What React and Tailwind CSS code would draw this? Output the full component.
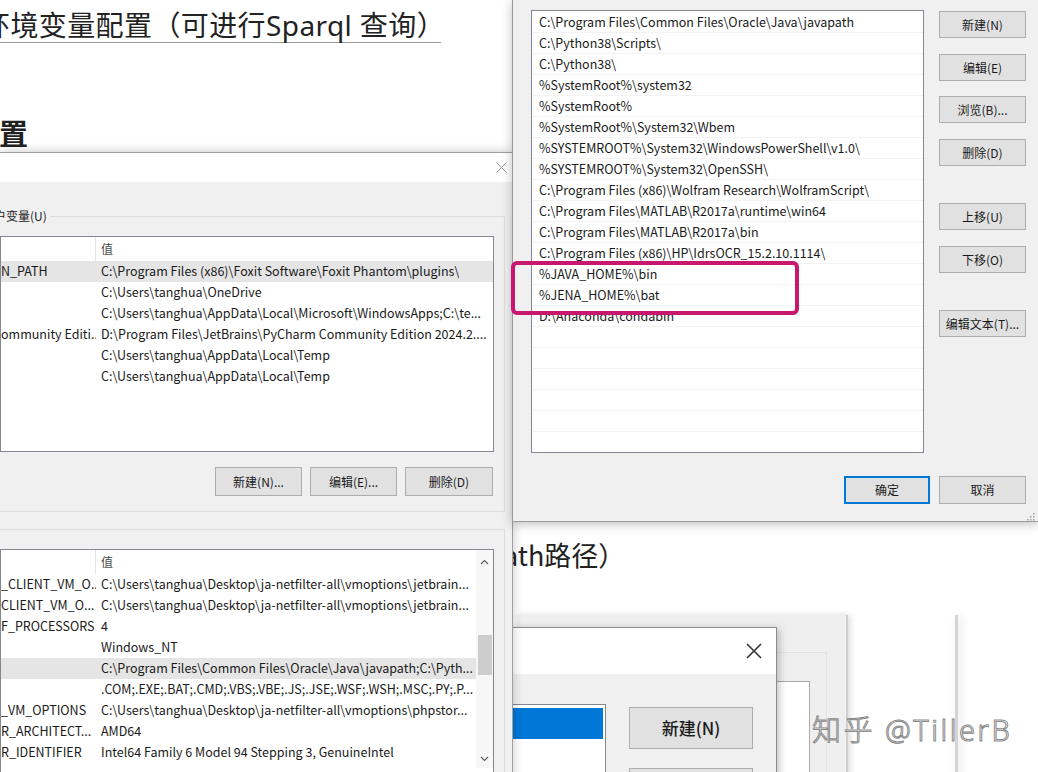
const list1 = [
  ["N_PATH", "C:\\Program Files (x86)\\Foxit Software\\Foxit Phantom\\plugins\\", true],
  ["", "C:\\Users\\tanghua\\OneDrive"],
  ["", "C:\\Users\\tanghua\\AppData\\Local\\Microsoft\\WindowsApps;C:\\te..."],
  ["ommunity Editi...", "D:\\Program Files\\JetBrains\\PyCharm Community Edition 2024.2...."],
  ["", "C:\\Users\\tanghua\\AppData\\Local\\Temp"],
  ["", "C:\\Users\\tanghua\\AppData\\Local\\Temp"],
];

const list2 = [
  ["_CLIENT_VM_O...", "C:\\Users\\tanghua\\Desktop\\ja-netfilter-all\\vmoptions\\jetbrain..."],
  ["CLIENT_VM_O...", "C:\\Users\\tanghua\\Desktop\\ja-netfilter-all\\vmoptions\\jetbrain..."],
  ["F_PROCESSORS", "4"],
  ["", "Windows_NT"],
  ["", "C:\\Program Files\\Common Files\\Oracle\\Java\\javapath;C:\\Pyth...", true],
  ["", ".COM;.EXE;.BAT;.CMD;.VBS;.VBE;.JS;.JSE;.WSF;.WSH;.MSC;.PY;.P..."],
  ["_VM_OPTIONS", "C:\\Users\\tanghua\\Desktop\\ja-netfilter-all\\vmoptions\\phpstor..."],
  ["R_ARCHITECT...", "AMD64"],
  ["R_IDENTIFIER", "Intel64 Family 6 Model 94 Stepping 3, GenuineIntel"],
];

const paths = [
  "C:\\Program Files\\Common Files\\Oracle\\Java\\javapath",
  "C:\\Python38\\Scripts\\",
  "C:\\Python38\\",
  "%SystemRoot%\\system32",
  "%SystemRoot%",
  "%SystemRoot%\\System32\\Wbem",
  "%SYSTEMROOT%\\System32\\WindowsPowerShell\\v1.0\\",
  "%SYSTEMROOT%\\System32\\OpenSSH\\",
  "C:\\Program Files (x86)\\Wolfram Research\\WolframScript\\",
  "C:\\Program Files\\MATLAB\\R2017a\\runtime\\win64",
  "C:\\Program Files\\MATLAB\\R2017a\\bin",
  "C:\\Program Files (x86)\\HP\\IdrsOCR_15.2.10.1114\\",
  "%JAVA_HOME%\\bin",
  "%JENA_HOME%\\bat",
  "D:\\Anaconda\\condabin",
  "", "", "", "", "", "",
];

function WinButton({ children, className = "" }) {
  return (
    <div
      className={
        "flex shrink-0 items-center justify-center bg-[#e1e1e1] border border-[#adadad] text-[12px] text-[#1a1a1a] " +
        className
      }
    >
      {children}
    </div>
  );
}

function Row({ c1, c2, hl, withScroll }) {
  return (
    <div
      className={
        "flex h-[21px] items-center whitespace-nowrap " +
        (hl ? "bg-[#e5e5e5] " : "") +
        (withScroll ? "w-[475px]" : "w-full")
      }
    >
      <div className="w-[95px] shrink-0 overflow-hidden text-[12.5px] text-[#1a1a1a]">{c1}</div>
      <div className="pl-[5px] overflow-hidden text-[12.5px] text-[#1a1a1a]">{c2}</div>
    </div>
  );
}

function Header() {
  return (
    <div className="flex h-[24px] items-center bg-white">
      <div className="w-[95px] h-full border-r border-[#e5e5e5]" />
      <div className="pl-[5px] text-[12px] text-[#4d4d4d]">值</div>
    </div>
  );
}

export default function App() {
  return (
    <div className="relative w-[1038px] h-[772px] overflow-hidden bg-white text-[#1a1a1a] font-['Noto_Sans_CJK_SC','Noto_Sans',sans-serif]">
      {/* article headings */}
      <div className="absolute left-[-18px] top-[8px] w-[459px] h-[35px] border-b border-[#9a9a9a] text-[28px] leading-[34px] tracking-[0.4px] whitespace-nowrap text-[#222] font-['Noto_Sans','Noto_Sans_CJK_SC',sans-serif]">
        环境变量配置（可进行Sparql 查询）
      </div>
      <div className="absolute left-[-1px] top-[112px] text-[29px] leading-[40px] font-bold text-[#222]">置</div>
      <div className="absolute left-[503px] top-[536px] text-[27px] leading-[38px] whitespace-nowrap text-[#222]">
        ath路径）
      </div>

      {/* bottom-right collage fragment */}
      <div className="absolute left-[517px] top-[615px] w-[331px] h-[170px] bg-[#efefef] border-r-2 border-[#cfcfcf] shadow-[2px_0_6px_rgba(0,0,0,0.15)]">
        <div className="absolute left-[260px] top-[37px] w-[50px] h-[150px] border-t border-r border-[#e2e2e2]" />
        <div className="absolute left-[255px] top-[66px] w-[38px] h-[150px] bg-white border-t border-r border-[#a9a9a9]" />
      </div>
      <div className="absolute left-[955px] top-[615px] w-[3px] h-[170px] bg-[#d4d4d4] shadow-[3px_0_8px_rgba(0,0,0,0.15)]" />
      <div className="absolute left-[512px] top-[627px] w-[265px] h-[200px] border-t border-r border-[#8c8c8c] bg-[#f0f0f0] shadow-[2px_2px_8px_rgba(0,0,0,0.25)] flex flex-col">
        <div className="h-[46px] shrink-0 bg-white flex items-center justify-end pr-[14px]">
          <svg width="16" height="16" viewBox="0 0 16 16">
            <path d="M1 1L15 15M15 1L1 15" stroke="#333" strokeWidth="1.6" />
          </svg>
        </div>
        <div className="flex shrink-0">
          <div className="mt-[30px] w-[94px] h-[80px] bg-white border-t border-r border-[#828790] pt-[3px] pr-[2px]">
            <div className="h-[31px] bg-[#0078d7]" />
          </div>
          <WinButton className="ml-[23px] mt-[33px] w-[124px] h-[42px] !text-[17px] font-medium">新建(N)</WinButton>
        </div>
        <WinButton className="ml-[117px] mt-[-16px] w-[124px] h-[42px]"> </WinButton>
      </div>

      {/* left window: environment variables */}
      <div className="absolute left-0 top-[152px] w-[513px] h-[640px] bg-[#f0f0f0] border-t border-r border-[#a0a0a0] shadow-[0_0_10px_rgba(0,0,0,0.22)] z-10 flex flex-col">
        <div className="h-[29px] bg-white flex items-center justify-end pr-[5px] shrink-0">
          <svg width="11" height="11" viewBox="0 0 11 11">
            <path d="M0.5 0.5L10.5 10.5M10.5 0.5L0.5 10.5" stroke="#9a9a9a" strokeWidth="1" />
          </svg>
        </div>
        {/* group 1 */}
        <div className="relative ml-[-10px] mt-[34px] w-[515px] border border-[#dcdcdc] pt-[19px] pb-[15px] shrink-0">
          <div className="absolute left-[-9px] top-[-10px] pr-[3px] bg-[#f0f0f0] text-[12px] leading-[18px] text-[#1a1a1a]">
            用户变量(U)
          </div>
          <div className="ml-[9px] w-[494px] h-[216px] bg-white border border-[#828790] overflow-hidden">
            <Header />
            {list1.map((r, i) => (
              <Row key={i} c1={r[0]} c2={r[1]} hl={r[2]} />
            ))}
          </div>
          <div className="flex justify-end gap-[8px] pr-[11px] mt-[15px]">
            <WinButton className="w-[87px] h-[29px]">新建(N)...</WinButton>
            <WinButton className="w-[87px] h-[29px]">编辑(E)...</WinButton>
            <WinButton className="w-[88px] h-[29px]">删除(D)</WinButton>
          </div>
        </div>
        {/* group 2 */}
        <div className="relative ml-[-10px] mt-[17px] w-[515px] h-[300px] border border-[#dcdcdc] pt-[19px] shrink-0">
          <div className="relative ml-[9px] w-[494px] h-[240px] bg-white border border-[#828790] overflow-hidden">
            <Header />
            {list2.map((r, i) => (
              <Row key={i} c1={r[0]} c2={r[1]} hl={r[2]} withScroll />
            ))}
            <div className="absolute right-0 top-0 w-[17px] h-[218px] bg-[#f7f7f7] flex flex-col items-center">
              <div className="h-[24px] flex items-center">
                <svg width="9" height="6" viewBox="0 0 9 6">
                  <path d="M1 5L4.5 1.5L8 5" stroke="#606060" strokeWidth="1.2" fill="none" />
                </svg>
              </div>
              <div className="mt-[61px] w-[14px] h-[40px] bg-[#cdcdcd]" />
              <div className="mt-[75px] h-[18px] flex items-center">
                <svg width="9" height="6" viewBox="0 0 9 6">
                  <path d="M1 1L4.5 4.5L8 1" stroke="#606060" strokeWidth="1.2" fill="none" />
                </svg>
              </div>
            </div>
          </div>
        </div>
      </div>

      {/* right window: edit environment variable */}
      <div className="absolute left-[512px] top-0 w-[526px] h-[522px] bg-[#f0f0f0] border-l border-b border-[#9a9a9a] shadow-[0_2px_10px_rgba(0,0,0,0.25)] z-20 flex flex-col">
        <div className="flex items-start">
          <div className="ml-[18px] mt-[10px] w-[393px] h-[443px] bg-white border border-[#828790] pt-[1px] overflow-hidden">
            {paths.map((p, i) => (
              <div
                key={i}
                className="h-[21px] flex items-center pl-[7px] border-b border-[#f3f3f3] text-[12.5px] whitespace-nowrap text-[#1a1a1a]"
              >
                {p}
              </div>
            ))}
          </div>
          <div className="ml-[15px] w-[87px] flex flex-col">
            <WinButton className="mt-[11px] h-[27px]">新建(N)</WinButton>
            <WinButton className="mt-[16px] h-[27px]">编辑(E)</WinButton>
            <WinButton className="mt-[15px] h-[27px]">浏览(B)...</WinButton>
            <WinButton className="mt-[16px] h-[27px]">删除(D)</WinButton>
            <WinButton className="mt-[37px] h-[27px]">上移(U)</WinButton>
            <WinButton className="mt-[16px] h-[27px]">下移(O)</WinButton>
            <WinButton className="mt-[37px] h-[27px]">编辑文本(T)...</WinButton>
          </div>
        </div>
        <div className="flex justify-end gap-[9px] pr-[12px] mt-[23px]">
          <WinButton className="w-[86px] h-[28px] !border-2 !border-[#0078d7]">确定</WinButton>
          <WinButton className="w-[87px] h-[28px]">取消</WinButton>
        </div>
        <div className="flex justify-end pr-[3px] mt-[9px]">
          <svg width="8" height="8" viewBox="0 0 8 8">
            <rect x="6" y="0" width="1.5" height="1.5" fill="#a0a0a0" />
            <rect x="3" y="3" width="1.5" height="1.5" fill="#a0a0a0" />
            <rect x="6" y="3" width="1.5" height="1.5" fill="#a0a0a0" />
            <rect x="0" y="6" width="1.5" height="1.5" fill="#a0a0a0" />
            <rect x="3" y="6" width="1.5" height="1.5" fill="#a0a0a0" />
            <rect x="6" y="6" width="1.5" height="1.5" fill="#a0a0a0" />
          </svg>
        </div>
      </div>

      {/* highlight box */}
      <div className="absolute left-[511px] top-[261px] w-[288px] h-[54px] border-[4px] border-[#c9166f] rounded-[6px] z-30" />

      {/* watermark */}
      <div className="absolute left-[812px] top-[710px] z-40 text-[29px] leading-[40px] tracking-[2.5px] whitespace-nowrap text-white font-light [-webkit-text-stroke:1px_#8a8a8a] font-['Noto_Sans','Noto_Sans_CJK_SC',sans-serif]">
        知乎 @TillerB
      </div>
    </div>
  );
}
